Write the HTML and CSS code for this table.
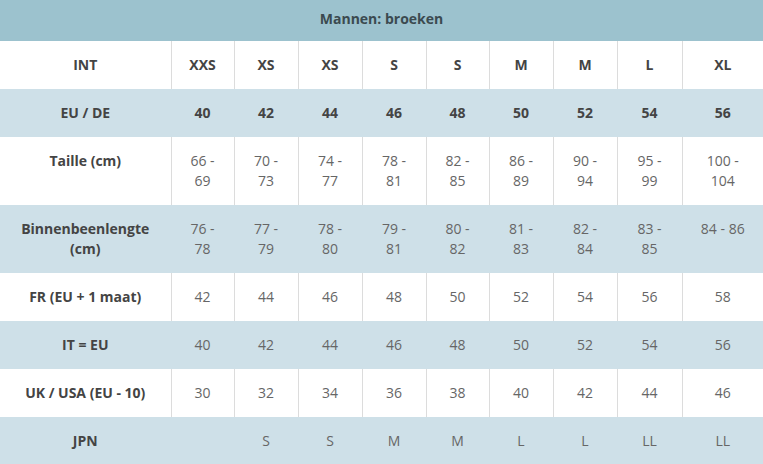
FILE: index.html
```html
<!DOCTYPE html>
<html lang="nl">
<head>
<meta charset="utf-8">
<title>Mannen: broeken</title>
<link rel="stylesheet" href="styles.css">
</head>
<body>
<table class="size-table">
  <colgroup>
    <col class="c-label">
    <col class="c63"><col class="c64"><col class="c64"><col class="c64">
    <col class="c63"><col class="c64"><col class="c64"><col class="c65">
    <col class="c-last">
  </colgroup>
  <thead>
    <tr><th class="title" colspan="10">Mannen: broeken</th></tr>
  </thead>
  <tbody>
    <tr class="w bold-row first"><th>INT</th><td>XXS</td><td>XS</td><td>XS</td><td>S</td><td>S</td><td>M</td><td>M</td><td>L</td><td>XL</td></tr>
    <tr class="b bold-row"><th>EU / DE</th><td>40</td><td>42</td><td>44</td><td>46</td><td>48</td><td>50</td><td>52</td><td>54</td><td>56</td></tr>
    <tr class="w double"><th>Taille (cm)</th><td>66 - 69</td><td>70 - 73</td><td>74 - 77</td><td>78 - 81</td><td>82 - 85</td><td>86 - 89</td><td>90 - 94</td><td>95 - 99</td><td>100 - 104</td></tr>
    <tr class="b"><th>Binnenbeenlengte (cm)</th><td>76 - 78</td><td>77 - 79</td><td>78 - 80</td><td>79 - 81</td><td>80 - 82</td><td>81 - 83</td><td>82 - 84</td><td>83 - 85</td><td>84 - 86</td></tr>
    <tr class="w"><th>FR (EU + 1 maat)</th><td>42</td><td>44</td><td>46</td><td>48</td><td>50</td><td>52</td><td>54</td><td>56</td><td>58</td></tr>
    <tr class="b"><th>IT = EU</th><td>40</td><td>42</td><td>44</td><td>46</td><td>48</td><td>50</td><td>52</td><td>54</td><td>56</td></tr>
    <tr class="w"><th>UK / USA (EU - 10)</th><td>30</td><td>32</td><td>34</td><td>36</td><td>38</td><td>40</td><td>42</td><td>44</td><td>46</td></tr>
    <tr class="b"><th>JPN</th><td></td><td>S</td><td>S</td><td>M</td><td>M</td><td>L</td><td>L</td><td>LL</td><td>LL</td></tr>
  </tbody>
</table>
</body>
</html>
```
FILE: styles.css
```css
html, body {
  margin: 0;
  padding: 0;
  background: #ffffff;
}
body {
  font-family: "Open Sans", "DejaVu Sans", sans-serif;
  font-size: 14px;
  line-height: 20px;
  color: #666;
}
.size-table {
  width: 763px;
  table-layout: fixed;
  border-collapse: collapse;
  border-spacing: 0;
}
.c-label { width: 171px; }
.c63 { width: 63px; }
.c64 { width: 64px; }
.c65 { width: 65px; }
.c-last { width: 81px; }

.title {
  background: #9cc2ce;
  color: #3b4a50;
  font-weight: 700;
  height: 38px;
  padding: 0 0 3px;
  text-align: center;
  vertical-align: middle;
}
.size-table tbody th,
.size-table tbody td {
  text-align: center;
  vertical-align: top;
  padding: 14px 12px 14px;
}
.size-table tbody th {
  font-weight: 700;
  color: #444;
}
.bold-row td {
  font-weight: 700;
  color: #444;
}
.w { background: #ffffff; }
.b { background: #cee0e8; }
.w td { border-left: 1px solid #dcdcdc; }
.b td { border-left: 1px solid #cee0e8; }
.first th,
.first td {
  padding-bottom: 13px;
}
.double th,
.double td {
  padding-bottom: 15px;
}
```
